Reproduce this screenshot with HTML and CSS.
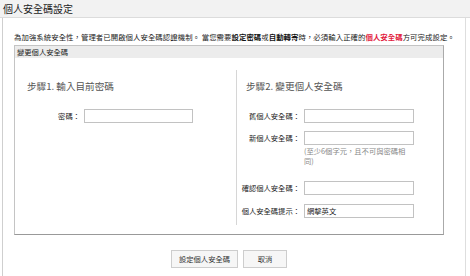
FILE: index.html
```html
<!DOCTYPE html>
<html lang="zh-Hant">
<head>
    <meta charset="UTF-8">
    <title>個人安全碼設定</title>
    <link rel="stylesheet" href="styles.css">
</head>
<body>
    <div class="titlebar">個人安全碼設定</div>
    <div class="panel">
        <p class="intro">為加強系統安全性，管理者已開啟個人安全碼認證機制。 當您需要<b>設定密碼</b>或<b>自動轉寄</b>時，必須輸入正確的<b class="red">個人安全碼</b>方可完成設定。</p>
        <div class="box">
            <div class="box-head">變更個人安全碼</div>
            <div class="steps">
                <!-- step 1: current password -->
                <div class="step step-1">
                    <h2>步驟1. 輸入目前密碼</h2>
                    <div class="row">
                        <label for="pwd">密碼：</label>
                        <input type="password" id="pwd">
                    </div>
                </div>
                <!-- step 2: new security code -->
                <div class="step step-2">
                    <h2>步驟2. 變更個人安全碼</h2>
                    <div class="row">
                        <label for="oldCode">舊個人安全碼：</label>
                        <input type="password" id="oldCode">
                    </div>
                    <div class="row">
                        <label for="newCode">新個人安全碼：</label>
                        <input type="password" id="newCode">
                    </div>
                    <div class="hint">(至少6個字元，且不可與密碼相同)</div>
                    <div class="row row-confirm">
                        <label for="confirmCode">確認個人安全碼：</label>
                        <input type="password" id="confirmCode">
                    </div>
                    <div class="row row-tip">
                        <label for="tip">個人安全碼提示：</label>
                        <input type="text" id="tip" value="網擊英文">
                    </div>
                </div>
            </div>
        </div>
        <div class="actions">
            <button class="btn btn-save">設定個人安全碼</button>
            <button class="btn btn-cancel">取消</button>
        </div>
    </div>
</body>
</html>
```

FILE: styles.css
```css
body {
    margin: 0;
    background: #fff;
    font-family: "Noto Sans CJK TC", "DejaVu Sans", sans-serif;
    color: #222;
    font-size: 7.3px;
}
.titlebar {
    height: 17px;
    line-height: 17px;
    padding-left: 3px;
    font-size: 10px;
    color: #222;
    background: #f2f2f2;
    border-bottom: 1px solid #dcdcdc;
}
.panel {
    margin: 0 4px 0 2px;
    height: 258px;
    padding: 0 21px 0 11px;
    border-left: 1px solid #cfcfcf;
    border-right: 1px solid #dedede;
}
.intro {
    margin: 0;
    padding-top: 14px;
    height: 13px;
    line-height: 10px;
    font-size: 7.4px;
    letter-spacing: 0.05px;
    white-space: nowrap;
}
.intro b {
    color: #111;
}
.intro .red {
    color: #e2203c;
}
.box {
    border: 1px solid #c4c4c4;
    border-right-color: #aaa;
    border-bottom-color: #999;
}
.box-head {
    height: 12px;
    line-height: 12px;
    padding-left: 2px;
    background: #ececec;
}
.steps {
    display: flex;
    margin: 12px 0 9px;
    height: 155px;
}
.step {
    padding-top: 10px;
}
.step h2 {
    margin: 0 0 17px;
    height: 12px;
    line-height: 12px;
    font-size: 9.6px;
    font-weight: normal;
    color: #555;
}
.step-1 {
    width: 209px;
    padding-left: 12px;
    border-right: 1px solid #d6d6d6;
}
.step-1 label {
    width: 53px;
}
.step-2 {
    padding-left: 3px;
}
.step-2 h2 {
    margin-left: 6px;
}
.step-2 label {
    width: 60px;
}
.row {
    display: flex;
    align-items: center;
    height: 14px;
    margin-bottom: 8px;
}
.row label {
    text-align: right;
    white-space: nowrap;
}
.row input {
    box-sizing: border-box;
    width: 109px;
    height: 14px;
    margin: 0 0 0 4px;
    padding: 0 2px;
    border: 1px solid #c2c2c2;
    font-family: inherit;
    font-size: 7.3px;
    color: #222;
    background: #fff;
}
.step-2 .row input {
    width: 110px;
}
.hint {
    width: 104px;
    margin: -7px 0 0 64px;
    line-height: 10px;
    color: #888;
}
.row-confirm {
    margin-top: 15px;
    margin-bottom: 9px;
}
.actions {
    display: flex;
    justify-content: center;
    gap: 5px;
    margin-top: 15px;
}
.btn {
    height: 18px;
    padding: 0;
    border: 1px solid #cdcdcd;
    background: #f6f6f6;
    font-family: inherit;
    font-size: 7.3px;
    color: #333;
}
.btn-save {
    width: 67px;
}
.btn-cancel {
    width: 44px;
}
```
